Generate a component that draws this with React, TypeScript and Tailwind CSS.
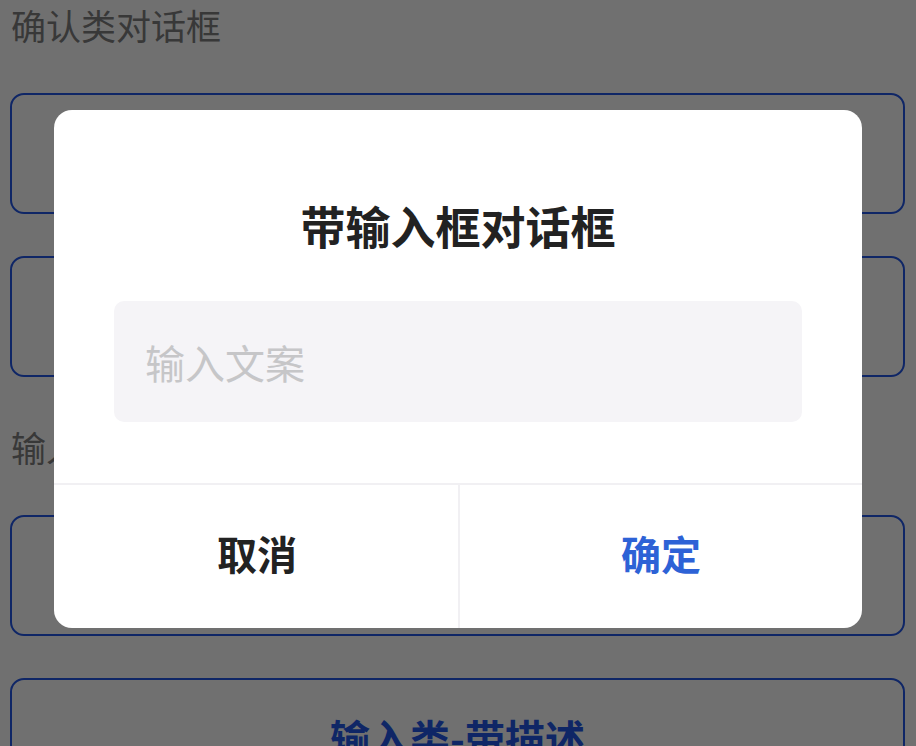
import { useState } from 'react'

const FONT = { fontFamily: '"Noto Sans CJK SC", "Noto Sans", sans-serif' }

function DemoButton({ label }: { label: string }) {
    return (
        <button className="h-[121px] w-full rounded-[14px] border-2 border-[#2458e8] bg-white pb-[4px] text-[40px] font-bold text-[#2458e8]">
            {label}
        </button>
    )
}

function Section({ title, items }: { title: string; items: string[] }) {
    return (
        <section>
            <h2 className="flex h-[50px] items-center px-[11px] text-[35px] font-normal text-[#808080]">
                {title}
            </h2>
            <div className="mt-[43px] flex flex-col gap-[42px] pl-[10px] pr-[11px]">
                {items.map(item => (
                    <DemoButton key={item} label={item} />
                ))}
            </div>
        </section>
    )
}

export default function App() {
    const [value, setValue] = useState('')

    return (
        <div className="relative h-[746px] w-[916px] overflow-hidden bg-white" style={FONT}>
            {/* 背景页面 */}
            <div className="flex flex-col gap-[45px]">
                <Section title="确认类对话框" items={['确认类-基础', '确认类-带描述']} />
                <Section title="输入类对话框" items={['输入类-基础', '输入类-带描述']} />
            </div>

            {/* 遮罩 + 对话框 */}
            <div className="absolute inset-0 flex items-start justify-center bg-[rgba(0,0,0,0.56)] pt-[110px]">
                <div className="w-[808px] overflow-hidden rounded-[18px] bg-white">
                    <h3 className="pt-[86px] text-center text-[45px] font-bold leading-[60px] text-[#222222]">
                        带输入框对话框
                    </h3>
                    <div className="mx-[60px] mt-[45px]">
                        <input
                            value={value}
                            onChange={e => setValue(e.target.value)}
                            placeholder="输入文案"
                            className="h-[121px] w-full rounded-[10px] bg-[#f5f4f7] px-[31px] text-[40px] text-[#222222] outline-none placeholder:text-[#c6c6c8]"
                        />
                    </div>
                    <div className="mt-[61px] flex h-[145px] border-t-2 border-[#f1f0f3]">
                        <button className="flex-1 border-r-2 border-[#f1f0f3] pb-[8px] pl-[2px] text-[40px] font-bold text-[#222222]">
                            取消
                        </button>
                        <button className="flex-1 pb-[8px] text-[40px] font-bold text-[#2d62d6]">
                            确定
                        </button>
                    </div>
                </div>
            </div>
        </div>
    )
}
